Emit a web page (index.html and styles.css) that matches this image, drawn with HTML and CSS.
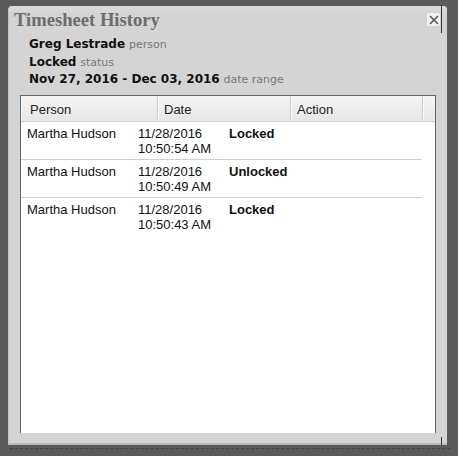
FILE: index.html
```html
<!DOCTYPE html>
<html>
<head>
<meta charset="utf-8">
<link rel="stylesheet" href="styles.css">
</head>
<body>
<div class="dialog">
  <div class="titlebar">
    <span class="title">Timesheet History</span>
    <span class="close"><svg width="10" height="10" viewBox="0 0 10 10"><path d="M1 1 L9 9 M9 1 L1 9" stroke="#555" stroke-width="1.6" fill="none"/></svg></span>
  </div>
  <div class="info">
    <div class="line"><b>Greg Lestrade</b> <span class="lbl">person</span></div>
    <div class="line"><b>Locked</b> <span class="lbl">status</span></div>
    <div class="line"><b>Nov 27, 2016 - Dec 03, 2016</b> <span class="lbl">date range</span></div>
  </div>
  <div class="grid">
    <div class="ghead">
      <div class="hcell h1">Person</div>
      <div class="hcell h2">Date</div>
      <div class="hcell h3">Action</div>
      <div class="hcell h4"></div>
    </div>
    <div class="gbody">
      <div class="row">
        <div class="c1">Martha Hudson</div>
        <div class="c2">11/28/2016<br>10:50:54 AM</div>
        <div class="c3">Locked</div>
      </div>
      <div class="row">
        <div class="c1">Martha Hudson</div>
        <div class="c2">11/28/2016<br>10:50:49 AM</div>
        <div class="c3">Unlocked</div>
      </div>
      <div class="row">
        <div class="c1">Martha Hudson</div>
        <div class="c2">11/28/2016<br>10:50:43 AM</div>
        <div class="c3">Locked</div>
      </div>
    </div>
  </div>
  <span class="tick tick-top"></span>
  <span class="tick tick-bottom"></span>
</div>
<div class="shadowline"></div>
</body>
</html>
```
FILE: styles.css
```css
html, body { margin: 0; padding: 0; }
body {
  background: #5b5b5b;
  width: 458px;
  height: 456px;
  overflow: hidden;
  padding-top: 6px;
  box-sizing: border-box;
}
.dialog {
  position: relative;
  margin-left: 8px;
  width: 439px;
  height: 439px;
  box-sizing: border-box;
  background: #d4d4d4;
  border-radius: 4px 4px 0 0;
  border-bottom: 2px solid #b9b9b9;
  border-left: 1px solid #c4c4c4;
  display: flex;
  flex-direction: column;
}
.titlebar {
  height: 27px;
  display: flex;
  align-items: center;
  justify-content: space-between;
  padding: 0 7px 0 5px;
  background: linear-gradient(#dcdcdc, #d4d4d4 8px, #d4d4d4);
  border-radius: 4px 4px 0 0;
}
.title {
  font-family: "Liberation Serif", serif;
  font-weight: bold;
  font-size: 18.6px;
  color: #6c6c6c;
  margin-top: 1px;
}
.close {
  width: 13px;
  height: 13px;
  background: #f2f2f2;
  border-radius: 2px;
  display: flex;
  align-items: center;
  justify-content: center;
}
.tick {
  position: absolute;
  left: 432px;
  width: 1px;
  background: #333;
}
.tick-top { top: -1px; height: 28px; }
.tick-bottom { bottom: -2px; height: 8px; }
.info {
  padding: 3px 0 0 20px;
  font-family: "DejaVu Sans", sans-serif;
  font-size: 12px;
  color: #111;
}
.line { height: 17.5px; line-height: 17.5px; }
.line b { font-weight: bold; }
.lbl { color: #777; font-size: 11px; }
.grid {
  margin: 6px 0 0 11px;
  width: 416px;
  height: 338px;
  box-sizing: border-box;
  background: #fff;
  border: 1px solid #666;
  border-bottom: none;
  font-family: "Liberation Sans", Arial, sans-serif;
  font-size: 13px;
  color: #111;
}
.ghead {
  display: flex;
  height: 26px;
  box-sizing: border-box;
  background: linear-gradient(#f6f6f6, #e6e6e6);
  border-bottom: 1px solid #cfcfcf;
}
.hcell {
  box-sizing: border-box;
  height: 100%;
  line-height: 28px;
  padding-left: 6px;
  border-right: 1px solid #cdcdcd;
  box-shadow: inset 1px 0 0 #fafafa;
  color: #222;
  overflow: visible;
}
.h1 { width: 137px; padding-left: 9px; }
.h2 { width: 133px; }
.h3 { width: 132px; }
.h4 { flex: 1; border-right: none; }
.gbody { width: 401px; }
.row {
  display: flex;
  height: 38px;
  box-sizing: border-box;
  border-bottom: 1px solid #d0d0d0;
  padding-top: 4px;
  line-height: 15px;
}
.row:last-child { border-bottom: none; }
.c1 { width: 111px; padding-left: 6px; }
.c2 { width: 91px; }
.c3 { font-weight: bold; }
.shadowline {
  margin: 3px 0 0 10px;
  width: 440px;
  border-top: 1px dashed #444;
}
```
